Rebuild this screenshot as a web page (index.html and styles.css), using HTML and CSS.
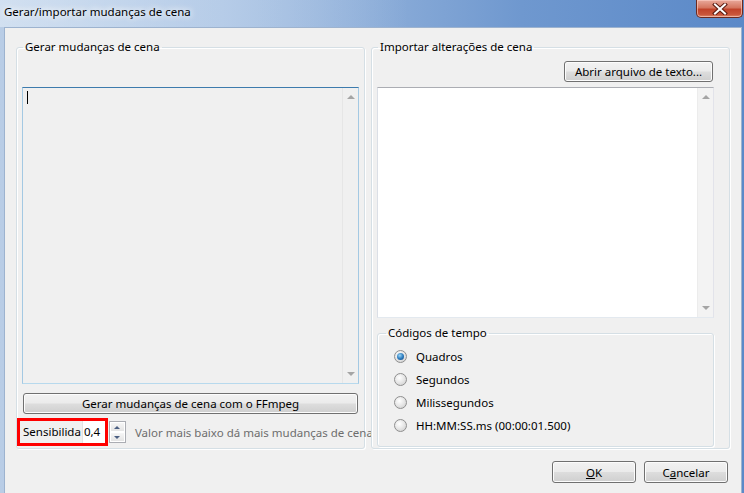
FILE: index.html
```html
<!DOCTYPE html>
<html>

<head>
  <title>Gerar/importar mudanças de cena</title>
  <meta charset="UTF-8">
  <link rel="stylesheet" href="styles.css">
</head>

<body>
  <div class="window">

    <div class="titleBar">
      <span class="title">Gerar/importar mudanças de cena</span>
      <div class="closeBtn">
        <svg width="16" height="12" viewBox="0 0 16 12">
          <path d="M3 1.5 L13 10.5 M13 1.5 L3 10.5" stroke="#5a1a10" stroke-width="4" stroke-linecap="square" />
          <path d="M3 1.5 L13 10.5 M13 1.5 L3 10.5" stroke="#ffffff" stroke-width="2" stroke-linecap="square" />
        </svg>
      </div>
    </div>

    <div class="client">
      <div class="columns">

        <fieldset class="group groupLeft">
          <legend>Gerar mudanças de cena</legend>
          <div class="textBox textBoxFocus">
            <div class="textArea"><span class="caret"></span></div>
            <div class="vScroll">
              <span class="arrowUp"></span>
              <span class="arrowDown"></span>
            </div>
          </div>
          <button class="btn btnWide">Gerar mudanças de cena com o FFmpeg</button>
          <div class="sensRow">
            <div class="highlight">
              <span class="sensLabel">Sensibilida</span>
              <span class="sensInput">0,4</span>
            </div>
            <div class="spin">
              <span class="spinHalf"><span class="spinUp"></span></span>
              <span class="spinHalf"><span class="spinDown"></span></span>
            </div>
            <span class="hint">Valor mais baixo dá mais mudanças de cena</span>
          </div>
        </fieldset>

        <fieldset class="group groupRight">
          <legend>Importar alterações de cena</legend>
          <div class="openRow">
            <button class="btn btnOpen">Abrir arquivo de texto...</button>
          </div>
          <div class="textBox textBoxWhite">
            <div class="textArea"></div>
            <div class="vScroll">
              <span class="arrowUp"></span>
              <span class="arrowDown"></span>
            </div>
          </div>
          <fieldset class="group groupTime">
            <legend>Códigos de tempo</legend>
            <div class="radioRow"><span class="radio checked"></span>Quadros</div>
            <div class="radioRow"><span class="radio"></span>Segundos</div>
            <div class="radioRow"><span class="radio"></span>Milissegundos</div>
            <div class="radioRow"><span class="radio"></span>HH:MM:SS.ms (00:00:01.500)</div>
          </fieldset>
        </fieldset>

      </div>

      <div class="footer">
        <button class="btn btnFoot"><u>O</u>K</button>
        <button class="btn btnFoot">C<u>a</u>ncelar</button>
      </div>
    </div>

  </div>
</body>

</html>
```

FILE: styles.css
```css
html,
body {
  margin: 0;
  padding: 0;
}

body {
  width: 744px;
  height: 493px;
  overflow: hidden;
  font-family: "Noto Sans", "Open Sans", sans-serif;
  font-size: 11.5px;
  color: #000;
}

.window {
  width: 744px;
  height: 493px;
  display: flex;
  flex-direction: column;
  background: linear-gradient(to right, #b9cde6 0%, #a9c2e2 30%, #6f98cf 70%, #5b89c8 100%);
}

/* title bar */
.titleBar {
  height: 27px;
  display: flex;
  justify-content: space-between;
  align-items: flex-start;
  background: linear-gradient(to right, rgba(220, 232, 245, 0.7) 0%, rgba(200, 218, 240, 0.5) 25%, rgba(120, 160, 210, 0) 55%);
}

.title {
  margin: 4px 0 0 4px;
  font-size: 11.5px;
  line-height: 16px;
  text-shadow: 0 0 6px #fff, 0 0 8px #fff;
}

.closeBtn {
  width: 45px;
  height: 17px;
  margin-right: 1px;
  border: 1px solid #6b2a20;
  border-top: none;
  border-radius: 0 0 5px 5px;
  background: linear-gradient(to bottom, #e9a99b 0%, #d5765f 45%, #c1432a 55%, #c9553a 85%, #dc8a6c 100%);
  box-shadow: inset 0 0 0 1px rgba(255, 210, 200, 0.6);
  display: flex;
  align-items: center;
  justify-content: center;
}

/* client area */
.client {
  flex: 1;
  margin: 0 2px 0 4px;
  background: #f0f0f0;
  border-left: 1px solid #9db3cf;
  border-top: 1px solid #9db3cf;
  border-right: 1px solid #9db3cf;
  display: flex;
  flex-direction: column;
}

.columns {
  display: flex;
  gap: 6px;
  padding: 11px 11px 0 11px;
}

.group {
  margin: 0;
  padding: 0 5px;
  min-width: 0;
  box-sizing: border-box;
  border: 1px solid #d5dfe5;
  border-radius: 3px;
  box-shadow: inset 1px 1px 0 #fff, 1px 1px 0 #fff;
}

.group legend {
  margin-left: 1px;
  padding: 0 2px;
  line-height: 16px;
}

.groupLeft {
  width: 349px;
  height: 410px;
}

.groupRight {
  width: 359px;
  height: 410px;
  padding-right: 15px;
}

/* text boxes */
.textBox {
  display: flex;
  box-sizing: border-box;
  border: 1px solid;
}

.groupLeft .textBox {
  margin-top: 32px;
  height: 297px;
}

.groupRight .textBox {
  margin-top: 5px;
  height: 231px;
}

.textBoxFocus {
  background: #f0f0f0;
  border-color: #3d7bad #a4c9e3 #b7d9ed #a4c9e3;
}

.textBoxWhite {
  background: #fff;
  border-color: #abadb3 #e2e3ea #e3e9ef #dbdfe6;
}

.textArea {
  flex: 1;
  padding: 3px 0 0 4px;
}

.caret {
  display: block;
  width: 1px;
  height: 13px;
  background: #000;
}

.vScroll {
  width: 16px;
  display: flex;
  flex-direction: column;
  justify-content: space-between;
  align-items: center;
  padding: 7px 0;
  box-sizing: border-box;
  background: #f0f0f0;
  border-left: 1px solid #e6e6e6;
}

.textBoxWhite .vScroll {
  background: #f3f3f3;
  border-left: 1px solid #ececec;
}

.arrowUp,
.arrowDown {
  width: 0;
  height: 0;
  border-left: 4px solid transparent;
  border-right: 4px solid transparent;
}

.arrowUp {
  border-bottom: 4px solid #a5a5a5;
}

.arrowDown {
  border-top: 4px solid #a5a5a5;
}

/* buttons */
.btn {
  font-family: inherit;
  font-size: 11.5px;
  color: #000;
  padding: 0;
  box-sizing: border-box;
  border: 1px solid #707070;
  border-radius: 3px;
  background: linear-gradient(to bottom, #f2f2f2 0%, #ebebeb 48%, #dddddd 52%, #cfcfcf 100%);
  box-shadow: inset 0 0 0 1px #fcfcfc;
}

.btnWide {
  display: block;
  width: 335px;
  height: 21px;
  margin: 9px 0 0 1px;
}

.openRow {
  display: flex;
  justify-content: flex-end;
  margin-top: 6px;
}

.btnOpen {
  width: 149px;
  height: 21px;
  margin-right: 1px;
}

/* sensitivity row */
.sensRow {
  display: flex;
  align-items: center;
  margin: 4px 0 0 -5px;
  height: 28px;
}

.highlight {
  flex-shrink: 0;
  display: flex;
  align-items: stretch;
  height: 28px;
  box-sizing: border-box;
  border: 3px solid #ff0000;
}

.sensLabel {
  padding: 0 1px 0 3px;
  line-height: 22px;
  white-space: nowrap;
}

.sensInput {
  width: 21px;
  background: #fff;
  line-height: 22px;
  padding-left: 1px;
  border-left: 1px solid #e3e3e3;
}

.spin {
  flex-shrink: 0;
  display: flex;
  flex-direction: column;
  width: 17px;
  height: 22px;
  margin-left: 1px;
  box-sizing: border-box;
  border: 1px solid #abadb3;
}

.spinHalf {
  flex: 1;
  display: flex;
  align-items: center;
  justify-content: center;
  background: linear-gradient(to bottom, #f6f6f6, #e4e4e4);
  border: 1px solid #fff;
}

.spinUp,
.spinDown {
  width: 0;
  height: 0;
  border-left: 3px solid transparent;
  border-right: 3px solid transparent;
}

.spinUp {
  border-bottom: 3px solid #4b5f82;
}

.spinDown {
  border-top: 3px solid #4b5f82;
}

.hint {
  margin-left: 9px;
  color: #6d6d6d;
  white-space: nowrap;
}

/* time codes */
.groupTime {
  margin-top: 7px;
  height: 122px;
  padding: 4px 5px 0 5px;
}

.groupTime legend {
  margin-left: 3px;
}

.radioRow {
  display: flex;
  align-items: center;
  height: 23px;
  padding-left: 11px;
}

.radio {
  width: 13px;
  height: 13px;
  box-sizing: border-box;
  border-radius: 50%;
  border: 1px solid #8f8f8f;
  background: radial-gradient(circle at 40% 35%, #ffffff 0%, #e6e6e6 50%, #c9c9c9 100%);
  margin-right: 9px;
  position: relative;
}

.radio.checked::after {
  content: "";
  position: absolute;
  left: 2px;
  top: 2px;
  width: 7px;
  height: 7px;
  border-radius: 50%;
  background: radial-gradient(circle at 40% 35%, #9dd6f6 0%, #2f7fc1 50%, #0d3f7a 100%);
}

/* footer */
.footer {
  display: flex;
  justify-content: flex-end;
  gap: 8px;
  padding: 12px 13px 0 0;
}

.btnFoot {
  width: 84px;
  height: 22px;
}
```
